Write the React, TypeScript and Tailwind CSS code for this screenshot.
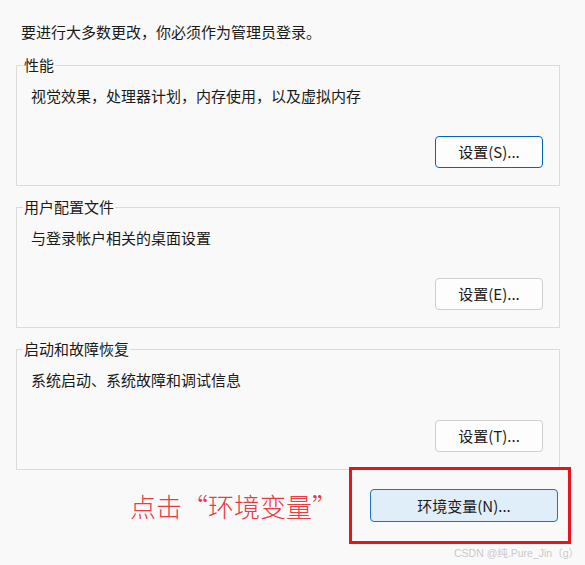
const sections = [
  { title: '性能', desc: '视觉效果，处理器计划，内存使用，以及虚拟内存', button: '设置(S)...', focused: true },
  { title: '用户配置文件', desc: '与登录帐户相关的桌面设置', button: '设置(E)...', focused: false },
  { title: '启动和故障恢复', desc: '系统启动、系统故障和调试信息', button: '设置(T)...', focused: false },
];

export default function App() {
  return (
    <div className="relative w-[585px] h-[565px] overflow-hidden bg-[#f9f9f9] text-[#1a1a1a] text-[15px] leading-[20px] font-['Noto_Sans_CJK_SC','Noto_Sans',sans-serif]">
      <p className="pt-[22px] pl-[21px]">要进行大多数更改，你必须作为管理员登录。</p>

      <div className="flex flex-col gap-[11px] mt-[13px]">
        {sections.map((s) => (
          <fieldset key={s.title} className="ml-[16px] w-[544px] border border-[#dcdcdc] px-[14px] pb-[17px]">
            <legend className="ml-[-8px] px-[1px] leading-[20px]">{s.title}</legend>
            <p className="mt-[11px]">{s.desc}</p>
            <div className="flex justify-end mt-[30px] mr-[2px]">
              <button
                className={
                  s.focused
                    ? 'w-[108px] h-[32px] rounded-[4px] border border-[#0067c0] bg-[#fdfdfd] text-[15px]'
                    : 'w-[108px] h-[32px] rounded-[4px] border border-[#cfcfcf] bg-[#fdfdfd] text-[15px]'
                }
              >
                {s.button}
              </button>
            </div>
          </fieldset>
        ))}
      </div>

      <div className="flex items-center mt-[19px]">
        <span className="ml-[130px] text-[26px] leading-[33px] text-[#ea3a44] font-['Noto_Sans_CJK_SC',serif] font-light">
          点击“环境变量”
        </span>
        <div className="relative ml-auto mr-[27px]">
          <button className="w-[188px] h-[33px] rounded-[4px] border border-[#1a73c8] bg-[#e0eef9] text-[15px]">
            环境变量(N)...
          </button>
          <div className="absolute left-[-21px] top-[-22px] w-[222px] h-[77px] border-[3px] border-[#e8141c] pointer-events-none" />
        </div>
      </div>

      <div className="absolute right-[6px] bottom-[4px] text-[10.5px] leading-[16px] text-[#c9c9c9] font-['Liberation_Sans','Noto_Sans_CJK_SC',sans-serif]">
        CSDN @纯.Pure_Jin（g）
      </div>
    </div>
  );
}
